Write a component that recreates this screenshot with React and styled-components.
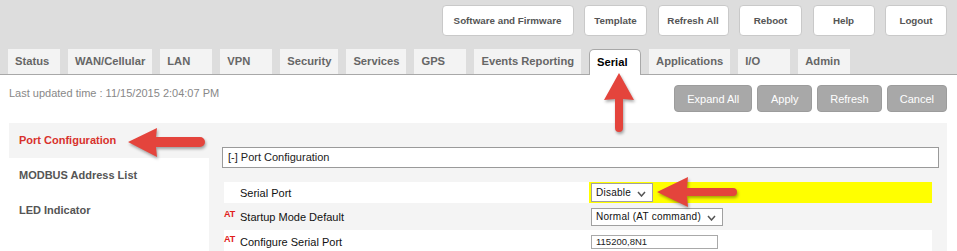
import React from "react";
import styled, { createGlobalStyle } from "styled-components";

const GlobalStyle = createGlobalStyle`
  body {
    margin: 0;
    background: #fff;
    font-family: "Liberation Sans", Arial, sans-serif;
    overflow: hidden;
  }
`;

const topButtons = [
  { label: "Software and Firmware", w: 132 },
  { label: "Template", w: 63 },
  { label: "Refresh All", w: 71 },
  { label: "Reboot", w: 63 },
  { label: "Help", w: 62 },
  { label: "Logout", w: 62 },
];

const tabs = [
  "Status",
  "WAN/Cellular",
  "LAN",
  "VPN",
  "Security",
  "Services",
  "GPS",
  "Events Reporting",
  "Serial",
  "Applications",
  "I/O",
  "Admin",
];

const menu = ["Port Configuration", "MODBUS Address List", "LED Indicator"];

export default function App() {
  return (
    <Page>
      <GlobalStyle />
      <Header>
        <TopActions>
          {topButtons.map((b) => (
            <TopButton key={b.label} $w={b.w}>
              {b.label}
            </TopButton>
          ))}
        </TopActions>
        <TabBar>
          {tabs.map((t) => (
            <Tab key={t} $active={t === "Serial"}>
              {t}
            </Tab>
          ))}
        </TabBar>
      </Header>

      <Toolbar>
        <Updated>Last updated time : 11/15/2015 2:04:07 PM</Updated>
        <ActionGroup>
          <ActionButton>Expand All</ActionButton>
          <ActionButton>Apply</ActionButton>
          <ActionButton>Refresh</ActionButton>
          <ActionButton>Cancel</ActionButton>
        </ActionGroup>
      </Toolbar>

      <Panel>
        <Sidebar>
          {menu.map((m, i) => (
            <MenuItem key={m} $active={i === 0}>
              {m}
            </MenuItem>
          ))}
        </Sidebar>
        <Content>
          <SectionHeader>[-] Port Configuration</SectionHeader>
          <Rows>
            <Row $h={21} $white>
              <Marker />
              <Label>Serial Port</Label>
              <Value $highlight>
                <Select $w={62} $h={19}>
                  Disable
                  <Chevron />
                </Select>
              </Value>
            </Row>
            <Row $h={27}>
              <Marker>AT</Marker>
              <Label>Startup Mode Default</Label>
              <Value>
                <Select $w={132} $h={18}>
                  Normal (AT command)
                  <Chevron />
                </Select>
              </Value>
            </Row>
            <Row $h={23} $white>
              <Marker>AT</Marker>
              <Label>Configure Serial Port</Label>
              <Value>
                <TextInput>115200,8N1</TextInput>
              </Value>
            </Row>
          </Rows>
        </Content>
      </Panel>

      <Arrow $left={600} $top={70} width="40" height="68" viewBox="0 0 40 68">
        <path d="M19 3 L34 30 L23 29 L23 58 A4 4 0 0 1 15 58 L15 29 L4 30 Z" />
      </Arrow>
      <Arrow $left={124} $top={124} width="86" height="38" viewBox="0 0 86 38">
        <path d="M4 18 L33 4 L32 13 L76 13 A5 5 0 0 1 76 23 L32 23 L33 33 Z" />
      </Arrow>
      <Arrow $left={652} $top={172} width="90" height="40" viewBox="0 0 90 40">
        <path d="M5 20 L36 5 L35 16 L81 16 A4 4 0 0 1 81 24 L35 24 L36 35 Z" />
      </Arrow>
    </Page>
  );
}

function Chevron() {
  return (
    <ChevronIcon width="9" height="6" viewBox="0 0 9 6">
      <path d="M1 1 L4.5 5 L8 1" fill="none" stroke="#555" strokeWidth="1.5" />
    </ChevronIcon>
  );
}

const Page = styled.div`
  position: relative;
  width: 957px;
  height: 251px;
`;

const Header = styled.div`
  background: #dddddd;
  padding: 5px 10px 0 8px;
  border-bottom: 1px solid #a8a8a8;
`;

const TopActions = styled.div`
  display: flex;
  justify-content: flex-end;
  gap: 10.5px;
`;

const TopButton = styled.div`
  box-sizing: border-box;
  width: ${(p) => p.$w}px;
  height: 31px;
  display: flex;
  align-items: center;
  justify-content: center;
  background: #fff;
  border: 1px solid #c9c9c9;
  border-radius: 4px;
  font-size: 9.8px;
  font-weight: bold;
  color: #555;
  white-space: nowrap;
`;

const TabBar = styled.div`
  display: flex;
  gap: 8px;
  margin-top: 13px;
  height: 25px;
  align-items: flex-end;
`;

const Tab = styled.div`
  box-sizing: border-box;
  min-width: 52px;
  height: ${(p) => (p.$active ? "26px" : "25px")};
  margin-bottom: ${(p) => (p.$active ? "-1px" : "0")};
  padding: 0 7px;
  line-height: 25px;
  font-size: 11.2px;
  font-weight: bold;
  white-space: nowrap;
  color: ${(p) => (p.$active ? "#000" : "#666")};
  background: ${(p) => (p.$active ? "#fff" : "#f3f3f3")};
  border: ${(p) => (p.$active ? "1px solid #a8a8a8" : "none")};
  border-bottom: none;
  border-radius: ${(p) => (p.$active ? "5px 5px 0 0" : "0")};
`;

const Toolbar = styled.div`
  display: flex;
  justify-content: space-between;
  align-items: flex-start;
  padding: 10px 10px 11px 9px;
`;

const Updated = styled.div`
  padding-top: 2px;
  font-size: 11px;
  color: #888;
`;

const ActionGroup = styled.div`
  display: flex;
  gap: 5px;
`;

const ActionButton = styled.div`
  box-sizing: border-box;
  min-width: 55px;
  height: 27px;
  padding: 0 12px;
  display: flex;
  align-items: center;
  justify-content: center;
  background: #a8a8a8;
  border: 1px solid #9c9c9c;
  border-radius: 4px;
  color: #fff;
  font-size: 11px;
`;

const Panel = styled.div`
  display: flex;
  margin: 0 10px 0 9px;
  height: 140px;
`;

const Sidebar = styled.div`
  width: 200px;
  background: #fff;
`;

const MenuItem = styled.div`
  height: 35px;
  line-height: 35px;
  padding-left: 10px;
  font-size: 11px;
  font-weight: bold;
  color: ${(p) => (p.$active ? "#d8322c" : "#555")};
  background: ${(p) => (p.$active ? "#f4f4f4" : "#fff")};
`;

const Content = styled.div`
  flex: 1;
  background: #f4f4f4;
  padding: 24px 8px 0 13px;
`;

const SectionHeader = styled.div`
  box-sizing: border-box;
  height: 21px;
  line-height: 19px;
  padding-left: 5px;
  background: #fff;
  border: 1px solid #9a9a9a;
  font-size: 11px;
  color: #222;
`;

const Rows = styled.div`
  margin: 14px 7px 0 2px;
`;

const Row = styled.div`
  display: grid;
  grid-template-columns: 16px 349px 1fr;
  height: ${(p) => p.$h}px;
  background: ${(p) => (p.$white ? "#fff" : "transparent")};
`;

const Marker = styled.div`
  align-self: center;
  margin-top: -6px;
  font-size: 9px;
  font-weight: bold;
  color: #e0201b;
`;

const Label = styled.div`
  display: flex;
  align-items: center;
  font-size: 11px;
  color: #111;
`;

const Value = styled.div`
  display: flex;
  align-items: center;
  padding-left: 2px;
  background: ${(p) => (p.$highlight ? "#ffff00" : "transparent")};
`;

const Select = styled.div`
  box-sizing: border-box;
  width: ${(p) => p.$w}px;
  height: ${(p) => p.$h}px;
  display: flex;
  align-items: center;
  justify-content: space-between;
  padding: 0 6px 0 4px;
  background: #fff;
  border: 1px solid #a0a0a0;
  font-size: 10px;
  letter-spacing: 0.25px;
  color: #111;
  white-space: nowrap;
`;

const ChevronIcon = styled.svg`
  flex-shrink: 0;
  margin-top: 2px;
`;

const TextInput = styled.div`
  box-sizing: border-box;
  width: 127px;
  height: 14px;
  line-height: 12px;
  padding-left: 4px;
  background: #fff;
  border: 1px solid #a9a9a9;
  font-size: 9.5px;
  color: #222;
`;

const Arrow = styled.svg`
  position: absolute;
  left: ${(p) => p.$left}px;
  top: ${(p) => p.$top}px;
  fill: #e4443c;
  filter: drop-shadow(1px 2px 1.5px rgba(0, 0, 0, 0.35));
`;
